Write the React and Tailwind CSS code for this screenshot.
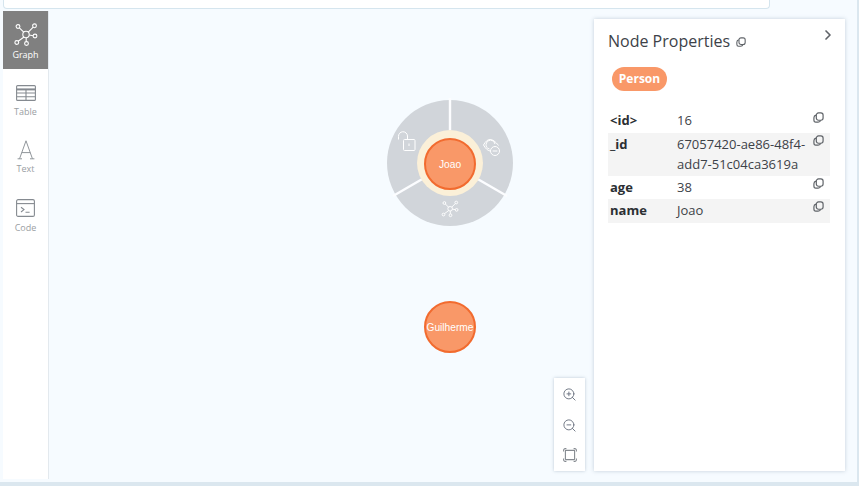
import { ZoomIn, ZoomOut, ChevronRight } from 'lucide-react'

const sans = 'font-["Open_Sans",sans-serif]'

function CopyIcon({ size = 11, className = '' }) {
  return (
    <svg width={size} height={size} viewBox="0 0 12 12" fill="none" stroke="currentColor" strokeWidth="1.3" className={className}>
      <rect x="3.6" y="1" width="7.4" height="8" rx="2.4" />
      <path d="M3.4 3.4 C1.6 3.8 1 4.8 1 6.2 V8.6 C1 10.4 1.8 11 3 11 H5.6 C7.2 11 8 10.4 8.4 9.2" />
    </svg>
  )
}

function GraphIcon({ size = 24, className = '' }) {
  return (
    <svg width={size} height={size} viewBox="0 0 24 24" fill="none" stroke="currentColor" strokeWidth="1.1" className={className}>
      <circle cx="12" cy="11.5" r="3.2" />
      <circle cx="4" cy="3.5" r="1.9" />
      <circle cx="20.5" cy="2.8" r="1.9" />
      <circle cx="21" cy="13" r="1.9" />
      <circle cx="2.8" cy="19.5" r="1.9" />
      <circle cx="12.5" cy="20.5" r="1.9" />
      <path d="M5.4 4.9 9.7 9.2M19.2 4.2 14.3 9.2M19.1 12.7 15.2 12M10 14 4.2 18.2M12.2 14.7V18.6" />
    </svg>
  )
}

function TableIcon() {
  return (
    <svg width="20" height="16" viewBox="0 0 20 16" fill="none" stroke="#858a90" strokeWidth="1.1">
      <rect x="0.6" y="0.6" width="18.8" height="14.8" rx="1" />
      <path d="M0.6 4.4H19.4" strokeWidth="2" />
      <path d="M0.6 8H19.4M0.6 11.8H19.4M10 4V15.4" />
    </svg>
  )
}

function TextIcon() {
  return (
    <svg width="18" height="20" viewBox="0 0 18 20" fill="none" stroke="#858a90" strokeWidth="0.9">
      <path d="M9 0.8 2.6 18.6M9 0.8 15.4 18.6M4.8 12.6H13.2M0.6 18.8H5M13 18.8H17.4" />
    </svg>
  )
}

function CodeIcon() {
  return (
    <svg width="19" height="18" viewBox="0 0 19 18" fill="none" stroke="#858a90" strokeWidth="1.1">
      <rect x="0.6" y="0.6" width="17.8" height="16.8" rx="1.5" />
      <path d="M0.6 4.6H18.4" />
      <path d="M5 8.2 8 10.6 5 13M9.5 13.2H13.6" />
    </svg>
  )
}

function FitIcon() {
  return (
    <svg width="14" height="14" viewBox="0 0 14 14" fill="none" stroke="#858a90" strokeWidth="1.1">
      <rect x="2.4" y="2.4" width="9.2" height="9.2" rx="0.5" />
      <path d="M0.6 3.4V2.2A1.6 1.6 0 0 1 2.2 .6H3.4M10.6 .6H11.8A1.6 1.6 0 0 1 13.4 2.2V3.4M13.4 10.6V11.8A1.6 1.6 0 0 1 11.8 13.4H10.6M3.4 13.4H2.2A1.6 1.6 0 0 1 .6 11.8V10.6" />
    </svg>
  )
}

function SideItem({ label, icon, active, className = '' }) {
  return (
    <div className={`flex flex-col items-center ${active ? 'bg-[#808080] text-white' : 'text-[#9a9ea3]'} ${className}`}>
      {icon}
      <span className={`text-[9px] leading-[12px] ${sans}`}>{label}</span>
    </div>
  )
}

// radial menu around the selected node, centre at 65,65
function RadialMenu() {
  return (
    <svg width="130" height="130" viewBox="0 0 130 130" className="absolute left-[385px] top-[98px]">
      <circle cx="65" cy="65" r="63" fill="#d1d5da" />
      <path d="M65 0V32M65 65 8 98M65 65 122 98" stroke="#fcfdff" strokeWidth="2.4" />
      <circle cx="65" cy="65" r="33" fill="#fbf0d8" />
      <g fill="none" stroke="#fff" strokeWidth="1">
        <rect x="18.5" y="41.5" width="11.5" height="11" rx="1" />
        <path d="M24 45.5V48" />
        <path d="M13.5 41.5V38.5A4.5 4.5 0 0 1 22.5 38V41.5" />
        <path d="M113.5 47.5C110.5 43.5 107.5 41.5 105 41.5C102.5 41.5 100.5 43.5 98.5 47C100.5 50.5 102.5 52.5 105 53" />
        <path d="M110 46A4.5 4.5 0 1 0 104.5 51" />
        <circle cx="110" cy="53" r="4.5" fill="#d1d5da" />
        <path d="M107.6 53H112.4" />
      </g>
      <g transform="translate(56.5 102.5) scale(0.72)" fill="none" stroke="#fff" strokeWidth="1.3">
        <circle cx="12" cy="11.5" r="3.2" />
        <circle cx="4" cy="3.5" r="1.9" />
        <circle cx="20.5" cy="2.8" r="1.9" />
        <circle cx="21" cy="13" r="1.9" />
        <circle cx="2.8" cy="19.5" r="1.9" />
        <circle cx="12.5" cy="20.5" r="1.9" />
        <path d="M5.4 4.9 9.7 9.2M19.2 4.2 14.3 9.2M19.1 12.7 15.2 12M10 14 4.2 18.2M12.2 14.7V18.6" />
      </g>
    </svg>
  )
}

function Node({ label, className }) {
  return (
    <div className={`absolute flex h-[52px] w-[52px] items-center justify-center rounded-full border-2 border-[#f26b2f] bg-[#f99868] pt-[1px] text-[10.2px] text-white font-["Liberation_Sans",sans-serif] ${className}`}>
      {label}
    </div>
  )
}

const rows = [
  { k: '<id>', v: '16', h: 'h-[25px]', bg: '', text: 'pt-[2px]', icon: 'mt-[4px]' },
  { k: '_id', v: '67057420-ae86-48f4-add7-51c04ca3619a', h: 'h-[43px]', bg: 'bg-[#f4f4f4]', text: 'pt-[1px]', icon: 'mt-[2px]' },
  { k: 'age', v: '38', h: 'h-[23px]', bg: '', text: 'pt-[1px]', icon: 'mt-[2px]' },
  { k: 'name', v: 'Joao', h: 'h-[24px]', bg: 'bg-[#f4f4f4]', text: 'pt-[1px]', icon: 'mt-[2px]' },
]

function PropRow({ k, v, h, bg, text, icon }) {
  return (
    <div className={`flex ${h} ${bg} pl-[2px] text-[13px] leading-[20px] text-[#3d4248]`}>
      <span className={`w-[67px] shrink-0 font-bold text-[#2b2f33] ${text}`}>{k}</span>
      <span className={`w-[133px] shrink-0 break-words ${text}`}>{v}</span>
      <CopyIcon className={`ml-[3px] text-[#5f6368] ${icon}`} />
    </div>
  )
}

export default function App() {
  return (
    <div className={`relative flex h-[486px] w-[859px] flex-col overflow-hidden bg-[#f6fbff] ${sans}`}>
      <div className="ml-[3px] h-[9px] w-[767px] shrink-0 rounded-b-sm border border-t-0 border-[#d5e5ee] bg-white" />
      <div className="flex min-h-0 flex-1 pt-[2px] pl-[3px]">
        <aside className="flex h-[468px] w-[46px] shrink-0 flex-col border-r border-[#e3e9ee] bg-white">
          <SideItem label="Graph" active className="h-[58px] gap-[2px] pt-[12px]" icon={<GraphIcon />} />
          <SideItem label="Table" className="h-[58px] gap-[5px] pt-[16px]" icon={<TableIcon />} />
          <SideItem label="Text" className="h-[58px] gap-[3px] pt-[13px]" icon={<TextIcon />} />
          <SideItem label="Code" className="h-[60px] gap-[5px] pt-[14px]" icon={<CodeIcon />} />
        </aside>
      </div>

      <RadialMenu />
      <Node label="Joao" className="left-[424px] top-[138px]" />
      <Node label="Guilherme" className="left-[424px] top-[301px]" />

      <div className="absolute left-[554px] top-[378px] flex h-[93px] w-[31px] flex-col items-center justify-between bg-white py-[9px] text-[#6b7280] shadow-[0_0_3px_rgba(120,140,160,0.45)]">
        <ZoomIn size={15} strokeWidth={1.5} />
        <ZoomOut size={15} strokeWidth={1.5} />
        <FitIcon />
      </div>

      <section className="absolute left-[594px] top-[19px] h-[452px] w-[251px] bg-white pl-[14px] pr-[15px] shadow-[0_0_4px_rgba(120,140,160,0.4)]">
        <ChevronRight size={16} strokeWidth={2.5} className="absolute right-[9px] top-[8px] text-[#5f6368]" />
        <div className="mt-[10px] flex items-center gap-[6px]">
          <h2 className="text-[16px] leading-[24px] text-[#3d4248]">Node Properties</h2>
          <CopyIcon size={10} className="mt-[1px] text-[#5f6368]" />
        </div>
        <div className="ml-[4px] mt-[14px] flex h-[24px] w-[55px] items-center justify-center rounded-full bg-[#f99868] text-[12px] font-bold text-white">
          Person
        </div>
        <div className="mt-[17px]">
          {rows.map(r => <PropRow key={r.k} {...r} />)}
        </div>
      </section>

      <div className="absolute right-0 top-0 h-[486px] w-[2px] bg-[#dbe7ef]" />
      <div className="absolute bottom-0 left-0 h-[4px] w-full bg-[#dbe7ef]" />
    </div>
  )
}
